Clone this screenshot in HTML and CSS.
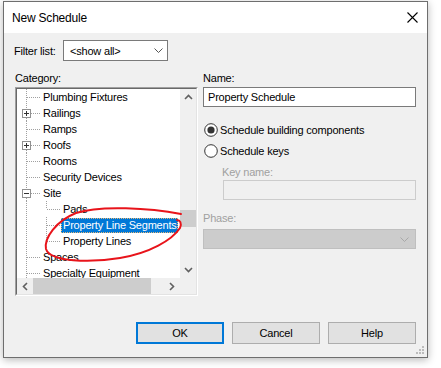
FILE: index.html
```html
<!DOCTYPE html>
<html>
<head>
<meta charset="utf-8">
<link rel="stylesheet" href="styles.css">
</head>
<body>
<div class="window">
  <div class="titlebar">
    <span class="title">New Schedule</span>
    <svg class="close" width="11" height="11" viewBox="0 0 11 11"><path d="M0.5 0.5 L10.5 10.5 M10.5 0.5 L0.5 10.5" stroke="#000" stroke-width="1.1" fill="none"/></svg>
  </div>
  <div class="content">
    <div class="filter-row">
      <span class="label filter-label">Filter list:</span>
      <div class="combo">
        <span>&lt;show all&gt;</span>
        <svg width="9" height="5" viewBox="0 0 9 5"><path d="M0.5 0.5 L4.5 4.5 L8.5 0.5" stroke="#555" fill="none"/></svg>
      </div>
    </div>
    <div class="main">
      <div class="left-col">
        <div class="label">Category:</div>
        <div class="listbox">
          <div class="listbox-inner">
            <div class="tree-area">
              <div class="tree">
                <div class="row"><svg class="g1" width="24" height="16"><path d="M9.5 0 V16" class="dot"/><path d="M10 8.5 H24" class="dot"/></svg><span class="lbl">Plumbing Fixtures</span></div>
                <div class="row"><svg class="g1" width="24" height="16"><path d="M9.5 0 V4 M9.5 13 V16" class="dot"/><path d="M14 8.5 H24" class="dot"/><rect x="5.5" y="4.5" width="8" height="8" fill="#fff" stroke="#919191"/><path d="M7 8.5 H12 M9.5 6 V11" stroke="#333"/></svg><span class="lbl">Railings</span></div>
                <div class="row"><svg class="g1" width="24" height="16"><path d="M9.5 0 V16" class="dot"/><path d="M10 8.5 H24" class="dot"/></svg><span class="lbl">Ramps</span></div>
                <div class="row"><svg class="g1" width="24" height="16"><path d="M9.5 0 V4 M9.5 13 V16" class="dot"/><path d="M14 8.5 H24" class="dot"/><rect x="5.5" y="4.5" width="8" height="8" fill="#fff" stroke="#919191"/><path d="M7 8.5 H12 M9.5 6 V11" stroke="#333"/></svg><span class="lbl">Roofs</span></div>
                <div class="row"><svg class="g1" width="24" height="16"><path d="M9.5 0 V16" class="dot"/><path d="M10 8.5 H24" class="dot"/></svg><span class="lbl">Rooms</span></div>
                <div class="row"><svg class="g1" width="24" height="16"><path d="M9.5 0 V16" class="dot"/><path d="M10 8.5 H24" class="dot"/></svg><span class="lbl">Security Devices</span></div>
                <div class="row"><svg class="g1" width="24" height="16"><path d="M9.5 0 V4 M9.5 13 V16" class="dot"/><path d="M14 8.5 H24" class="dot"/><rect x="5.5" y="4.5" width="8" height="8" fill="#fff" stroke="#919191"/><path d="M7 8.5 H12" stroke="#333"/></svg><span class="lbl">Site</span></div>
                <div class="row"><svg class="g2" width="44" height="16"><path d="M9.5 0 V16" class="dot"/><path d="M29.5 0 V8" class="dot"/><path d="M30 8.5 H44" class="dot"/></svg><span class="lbl">Pads</span></div>
                <div class="row"><svg class="g2" width="44" height="16"><path d="M9.5 0 V16" class="dot"/><path d="M29.5 0 V16" class="dot"/><path d="M30 8.5 H44" class="dot"/></svg><span class="lbl selected">Property Line Segments</span></div>
                <div class="row"><svg class="g2" width="44" height="16"><path d="M9.5 0 V16" class="dot"/><path d="M29.5 0 V8" class="dot"/><path d="M30 8.5 H44" class="dot"/></svg><span class="lbl">Property Lines</span></div>
                <div class="row"><svg class="g1" width="24" height="16"><path d="M9.5 0 V16" class="dot"/><path d="M10 8.5 H24" class="dot"/></svg><span class="lbl">Spaces</span></div>
                <div class="row"><svg class="g1" width="24" height="16"><path d="M9.5 0 V16" class="dot"/><path d="M10 8.5 H24" class="dot"/></svg><span class="lbl">Specialty Equipment</span></div>
              </div>
              <div class="vscroll">
                <div class="arrow"><svg width="9" height="6" viewBox="0 0 9 6"><path d="M1 5 L4.5 1.5 L8 5" stroke="#606060" stroke-width="1.6" fill="none"/></svg></div>
                <div class="vtrack"><div class="vthumb"></div></div>
                <div class="arrow"><svg width="9" height="6" viewBox="0 0 9 6"><path d="M1 1 L4.5 4.5 L8 1" stroke="#606060" stroke-width="1.6" fill="none"/></svg></div>
              </div>
            </div>
            <div class="hscroll">
              <div class="harrow"><svg width="6" height="9" viewBox="0 0 6 9"><path d="M5 1 L1.5 4.5 L5 8" stroke="#606060" stroke-width="1.6" fill="none"/></svg></div>
              <div class="htrack"><div class="hthumb"></div></div>
              <div class="harrow"><svg width="6" height="9" viewBox="0 0 6 9"><path d="M1 1 L4.5 4.5 L1 8" stroke="#606060" stroke-width="1.6" fill="none"/></svg></div>
              <div class="corner"></div>
            </div>
          </div>
        </div>
      </div>
      <div class="right-col">
        <div class="label">Name:</div>
        <div class="textbox">Property Schedule</div>
        <div class="radios">
          <div class="radio-row"><svg width="14" height="14" viewBox="0 0 14 14"><circle cx="7" cy="7" r="6.3" fill="#fff" stroke="#333" stroke-width="1"/><circle cx="7" cy="7" r="3.6" fill="#333"/></svg><span>Schedule building components</span></div>
          <div class="radio-row"><svg width="14" height="14" viewBox="0 0 14 14"><circle cx="7" cy="7" r="6.3" fill="#fff" stroke="#333" stroke-width="1"/></svg><span>Schedule keys</span></div>
        </div>
        <div class="label disabled keylabel">Key name:</div>
        <div class="textbox keybox"></div>
        <div class="label disabled phaselabel">Phase:</div>
        <div class="combo disabled-combo">
          <span></span>
          <svg width="9" height="5" viewBox="0 0 9 5"><path d="M0.5 0.5 L4.5 4.5 L8.5 0.5" stroke="#a8a8a8" fill="none"/></svg>
        </div>
      </div>
    </div>
    <div class="buttons">
      <div class="btn default">OK</div>
      <div class="btn">Cancel</div>
      <div class="btn">Help</div>
    </div>
  </div>
  <svg class="grip" width="9" height="9" viewBox="0 0 9 9">
    <rect x="6" y="0" width="2" height="2" fill="#bcbcbc"/>
    <rect x="3" y="3" width="2" height="2" fill="#bcbcbc"/>
    <rect x="6" y="3" width="2" height="2" fill="#bcbcbc"/>
    <rect x="0" y="6" width="2" height="2" fill="#bcbcbc"/>
    <rect x="3" y="6" width="2" height="2" fill="#bcbcbc"/>
    <rect x="6" y="6" width="2" height="2" fill="#bcbcbc"/>
  </svg>
</div>
<svg class="annotation" width="441" height="368" viewBox="0 0 441 368">
  <path d="M181 214 C150 208 100 205 76 213 C56 221 44 238 46 249 C50 262 90 263 120 258 C150 253 172 240 180 228 C182 223 180 220 177 220" stroke="#e8141b" stroke-width="2" fill="none" stroke-linecap="round"/>
</svg>
</body>
</html>
```

FILE: styles.css
```css
html, body {
  margin: 0;
  padding: 0;
  background: #ffffff;
}
body {
  position: relative;
  width: 441px;
  height: 368px;
  overflow: hidden;
  font-family: "Liberation Sans", Arial, sans-serif;
  font-size: 11px;
  letter-spacing: -0.2px;
  color: #000;
}
.window {
  position: relative;
  box-sizing: border-box;
  margin: 1px 0 0 3px;
  width: 425px;
  height: 357px;
  border: 1px solid #6e6e6e;
  background: #f0f0f0;
  box-shadow: 0 2px 8px rgba(0, 0, 0, 0.28);
  display: flex;
  flex-direction: column;
}
.titlebar {
  height: 31px;
  background: #fff;
  display: flex;
  align-items: center;
  justify-content: space-between;
  padding: 0 9px 0 8px;
  flex-shrink: 0;
}
.title {
  font-size: 12px;
}
.content {
  display: flex;
  flex-direction: column;
  padding: 7px 11px 0 11px;
}
.label {
  line-height: 16px;
  height: 16px;
  white-space: nowrap;
}
.filter-row {
  display: flex;
  align-items: center;
  gap: 6px;
}
.filter-label {
  margin-left: -1px;
  width: 43px;
}
.combo {
  box-sizing: border-box;
  width: 105px;
  height: 21px;
  border: 1px solid #7a7a7a;
  background: #fff;
  display: flex;
  align-items: center;
  justify-content: space-between;
  padding: 0 4px 0 6px;
}
.main {
  display: flex;
  gap: 5px;
  margin-top: 9px;
}
.left-col {
  width: 183px;
  flex-shrink: 0;
}
.listbox {
  margin-top: 1px;
  box-sizing: border-box;
  height: 209px;
  border: 1px solid;
  border-color: #a0a0a0 #ffffff #ffffff #a0a0a0;
}
.listbox-inner {
  height: 100%;
  box-sizing: border-box;
  border: 1px solid;
  border-color: #696969 #e3e3e3 #e3e3e3 #696969;
  background: #fff;
  display: flex;
  flex-direction: column;
}
.tree-area {
  display: flex;
  height: 189px;
  overflow: hidden;
}
.tree {
  flex: 1;
  min-width: 0;
  overflow: hidden;
  background: #fff;
}
.row {
  height: 16px;
  display: flex;
  align-items: center;
  white-space: nowrap;
}
.row svg {
  flex-shrink: 0;
  display: block;
}
.dot {
  stroke: #a0a0a0;
  stroke-width: 1;
  stroke-dasharray: 1 1;
  fill: none;
}
.lbl {
  padding: 0 2px;
  line-height: 15px;
  height: 15px;
  box-sizing: border-box;
}
.lbl.selected {
  background: #0078d7;
  color: #fff;
  outline: 1px dotted #e8b878;
  outline-offset: -1px;
  padding: 0 1px 0 2px;
}
.vscroll {
  width: 16px;
  flex-shrink: 0;
  background: #f0f0f0;
  display: flex;
  flex-direction: column;
}
.arrow {
  height: 16px;
  display: flex;
  align-items: center;
  justify-content: center;
  flex-shrink: 0;
}
.vtrack {
  flex: 1;
  padding-top: 105px;
}
.vthumb {
  height: 17px;
  background: #cdcdcd;
}
.hscroll {
  height: 16px;
  display: flex;
  background: #f0f0f0;
}
.harrow {
  width: 16px;
  display: flex;
  align-items: center;
  justify-content: center;
  flex-shrink: 0;
}
.htrack {
  flex: 1;
  display: flex;
}
.hthumb {
  width: 118px;
  background: #cdcdcd;
}
.corner {
  width: 16px;
  background: #f0f0f0;
}
.right-col {
  width: 213px;
  display: flex;
  flex-direction: column;
}
.textbox {
  box-sizing: border-box;
  margin-top: 1px;
  height: 20px;
  border: 1px solid #7a7a7a;
  background: #fff;
  padding: 0 4px;
  line-height: 18px;
  white-space: nowrap;
}
.radios {
  margin-top: 12px;
  display: flex;
  flex-direction: column;
}
.radio-row {
  height: 21px;
  display: flex;
  align-items: center;
  gap: 2px;
  margin-left: 1px;
  white-space: nowrap;
}
.radio-row svg {
  display: block;
}
.disabled {
  color: #a0a0a0;
}
.keylabel {
  margin-top: 3px;
  padding-left: 19px;
}
.keybox {
  margin-top: 0;
  margin-left: 20px;
  border-color: #cccccc;
  background: #f0f0f0;
}
.phaselabel {
  margin-top: 10px;
}
.disabled-combo {
  margin-top: 3px;
  width: 213px;
  height: 20px;
  background: #cccccc;
  border-color: #bfbfbf;
  padding-right: 6px;
}
.buttons {
  display: flex;
  justify-content: flex-end;
  gap: 8px;
  margin-top: 26px;
}
.btn {
  box-sizing: border-box;
  width: 88px;
  height: 22px;
  border: 1px solid #adadad;
  background: #e1e1e1;
  display: flex;
  align-items: center;
  justify-content: center;
}
.btn.default {
  border: 2px solid #0078d7;
}
.grip {
  position: absolute;
  right: 2px;
  bottom: 2px;
}
.annotation {
  position: absolute;
  left: 0;
  top: 0;
  pointer-events: none;
}
```
